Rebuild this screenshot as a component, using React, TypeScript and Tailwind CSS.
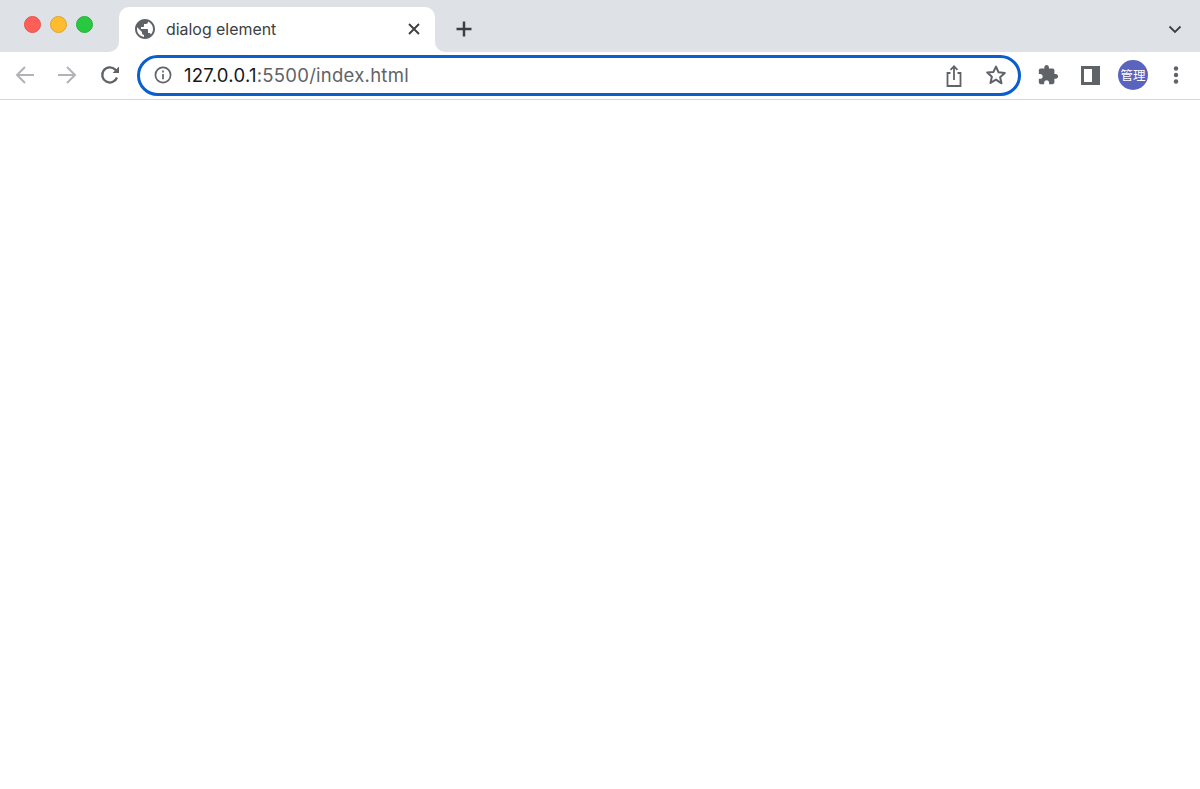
import React from 'react';

const sans = "font-['Inter','Liberation_Sans',sans-serif]";

function TrafficLights() {
  return (
    <div className="flex items-center gap-[9px] pl-[23.500px] pt-[16px] self-start w-[119px] shrink-0">
      <div className="w-[17px] h-[17px] rounded-full bg-[#ff5f57] border border-[#e5534b]" />
      <div className="w-[17px] h-[17px] rounded-full bg-[#febc2e] border border-[#e0a528]" />
      <div className="w-[17px] h-[17px] rounded-full bg-[#28c840] border border-[#25b23a]" />
    </div>
  );
}

function Tab() {
  return (
    <div className="relative w-[316px] h-[45px] shrink-0 bg-white rounded-t-[10px] flex items-center pl-[16px] pr-[14px] pb-[1px]">
      <div className="absolute left-[-10px] bottom-0 w-[10px] h-[10px] bg-white">
        <div className="w-full h-full bg-[#dee1e6] rounded-br-[10px]" />
      </div>
      <div className="absolute right-[-10px] bottom-0 w-[10px] h-[10px] bg-white">
        <div className="w-full h-full bg-[#dee1e6] rounded-bl-[10px]" />
      </div>
      <svg width="24" height="24" viewBox="0 0 24 24" className="text-[#5f6368] shrink-0 -ml-[2px]" fill="currentColor">
        <path d="M12 2C6.48 2 2 6.48 2 12s4.48 10 10 10 10-4.48 10-10S17.52 2 12 2zm-1 17.93c-3.95-.49-7-3.85-7-7.93 0-.62.08-1.21.21-1.79L9 15v1c0 1.1.9 2 2 2v1.93zm6.9-2.54c-.26-.81-1-1.39-1.9-1.39h-1v-3c0-.55-.45-1-1-1H8v-2h2c.55 0 1-.45 1-1V7h2c1.1 0 2-.9 2-2v-.41c2.93 1.19 5 4.06 5 7.41 0 2.08-.8 3.97-2.1 5.39z" />
      </svg>
      <span className={`${sans} ml-[9px] mt-[1px] text-[15.900px] text-[#3c4043] flex-1 whitespace-nowrap`}>dialog element</span>
      <svg width="14" height="14" viewBox="0 0 14 14" className="text-[#3c4043]" fill="none" stroke="currentColor" strokeWidth="1.900">
        <path d="M2 2l10 10M12 2L2 12" />
      </svg>
    </div>
  );
}

function Toolbar() {
  return (
    <div className="h-[48px] bg-white border-b border-[#d5d6d8] flex items-center">
      <div className="flex items-center w-[137px] shrink-0 pl-[14px] gap-[20px] pb-[1px]">
        <svg width="22" height="22" viewBox="0 0 22 22" fill="none" stroke="#b1b3b6" strokeWidth="2">
          <path d="M20 11H3M11 3l-8 8 8 8" />
        </svg>
        <svg width="22" height="22" viewBox="0 0 22 22" fill="none" stroke="#b1b3b6" strokeWidth="2">
          <path d="M2 11h17M11 3l8 8-8 8" />
        </svg>
        <svg width="22" height="22" viewBox="0 0 22 22" fill="none" stroke="#5f6368" strokeWidth="2.300" className="ml-[1px]">
          <path d="M18 13.500A7.600 7.600 0 1 1 16.300 5.600L19 8" />
          <path d="M20 2.600V9h-6.400z" fill="#5f6368" stroke="none" />
        </svg>
      </div>
      <div className="w-[884px] h-[41px] shrink-0 rounded-full border-[3px] border-[#0b5fcc] flex items-center pl-[14px] pr-[11.500px] mb-[1px]">
        <svg width="18" height="18" viewBox="0 0 18 18" fill="none" stroke="#5f6368" strokeWidth="1.700" className="shrink-0">
          <circle cx="9" cy="9" r="7.600" />
          <path d="M9 8v5.200" />
          <path d="M9 4.600v1.800" />
        </svg>
        <div className={`${sans} ml-[12px] mt-[1px] text-[18.500px] tracking-[0.260px] flex-1 whitespace-nowrap text-[#5f6368]`}>
          <span className="text-[#16181a]">127.0.0.1</span>:5500/index.html
        </div>
        <svg width="18" height="24" viewBox="0 0 18 24" fill="none" stroke="#5f6368" strokeWidth="1.800" className="shrink-0 mt-[1px]">
          <path d="M5.500 9H2.500v13h13V9h-3" />
          <path d="M9 16V2.500M5.500 5.800L9 2.300l3.500 3.500" />
        </svg>
        <svg width="22" height="22" viewBox="0 0 24 24" fill="none" stroke="#5f6368" strokeWidth="2.200" className="shrink-0 ml-[22px]">
          <path d="M12 2.800l2.800 6.300 6.800.7-5.100 4.600 1.500 6.700L12 17l-6 3.600 1.500-6.700-5.100-4.600 6.800-.7z" strokeLinejoin="round" />
        </svg>
      </div>
      <div className="flex items-center flex-1 pl-[16px] mb-[1px]">
        <svg width="22" height="22" viewBox="0 0 24 24" fill="#5f6368" className="shrink-0">
          <path d="M20.500 11H19V7c0-1.100-.9-2-2-2h-4V3.500C13 2.120 11.880 1 10.500 1S8 2.120 8 3.500V5H4c-1.100 0-1.990.9-1.990 2v3.800H3.500c1.490 0 2.700 1.210 2.700 2.700s-1.210 2.700-2.700 2.700H2V20c0 1.100.9 2 2 2h3.800v-1.500c0-1.490 1.210-2.700 2.700-2.700 1.490 0 2.700 1.210 2.700 2.700V22H17c1.100 0 2-.9 2-2v-4h1.500c1.380 0 2.500-1.120 2.500-2.500S21.880 11 20.500 11z" />
        </svg>
        <div className="ml-[22px] w-[19px] h-[19px] border-[3px] border-[#5f6368] border-r-[8px] shrink-0" />
        <div className="ml-[18px] w-[30px] h-[30px] rounded-full bg-[#5a63bd] text-white flex items-center justify-center text-[12.500px] font-['Noto_Sans_CJK_SC',sans-serif] shrink-0">
          管理
        </div>
        <svg width="6" height="20" viewBox="0 0 6 20" fill="#5f6368" className="ml-[25px] shrink-0">
          <circle cx="3" cy="3.500" r="2.200" />
          <circle cx="3" cy="10" r="2.200" />
          <circle cx="3" cy="16.500" r="2.200" />
        </svg>
      </div>
    </div>
  );
}

export default function App() {
  return (
    <div className="min-h-[789px] bg-white">
      <div className="h-[52px] bg-[#dee1e6] flex items-end">
        <TrafficLights />
        <Tab />
        <svg width="18" height="18" viewBox="0 0 18 18" fill="none" stroke="#3c4043" strokeWidth="2.500" className="ml-[20px] mb-[14px] shrink-0">
          <path d="M9 1.500v15M1.500 9h15" />
        </svg>
        <svg width="14" height="9" viewBox="0 0 14 9" fill="none" stroke="#3c4043" strokeWidth="1.800" className="ml-auto mr-[18px] mb-[18px] shrink-0">
          <path d="M1.500 1.500L7 7l5.500-5.500" />
        </svg>
      </div>
      <Toolbar />
    </div>
  );
}
